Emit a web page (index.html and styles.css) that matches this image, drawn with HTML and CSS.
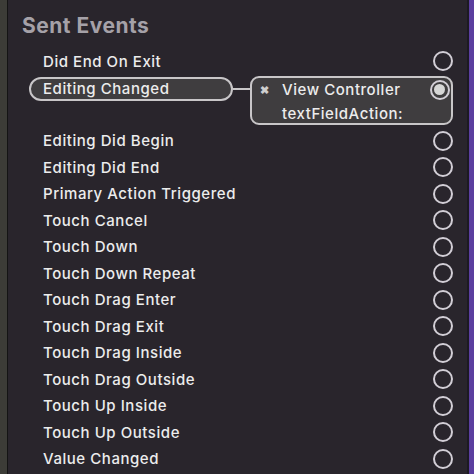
FILE: index.html
```html
<!DOCTYPE html>
<html>
<head>
<meta charset="utf-8">
<title>Sent Events</title>
<link rel="stylesheet" href="styles.css">
</head>
<body>
<div class="frame">
    <div class="left-strip"></div>
    <div class="panel">
        <div class="top-line"></div>
        <h2 class="heading">Sent Events</h2>

        <div class="events">
            <div class="row"><span class="label">Did End On Exit</span><span class="dot"></span></div>

            <div class="row connected">
                <div class="pill">Editing Changed</div>
                <div class="wire"></div>
                <div class="target">
                    <div class="target-line">
                        <span class="remove">&#10006;</span>
                        <span class="label">View Controller</span>
                        <span class="dot dot-on"></span>
                    </div>
                    <div class="target-line">
                        <span class="remove"></span>
                        <span class="label">textFieldAction:</span>
                    </div>
                </div>
            </div>

            <div class="row"><span class="label">Editing Did Begin</span><span class="dot"></span></div>
            <div class="row"><span class="label">Editing Did End</span><span class="dot"></span></div>
            <div class="row"><span class="label">Primary Action Triggered</span><span class="dot"></span></div>
            <div class="row"><span class="label">Touch Cancel</span><span class="dot"></span></div>
            <div class="row"><span class="label">Touch Down</span><span class="dot"></span></div>
            <div class="row"><span class="label">Touch Down Repeat</span><span class="dot"></span></div>
            <div class="row"><span class="label">Touch Drag Enter</span><span class="dot"></span></div>
            <div class="row"><span class="label">Touch Drag Exit</span><span class="dot"></span></div>
            <div class="row"><span class="label">Touch Drag Inside</span><span class="dot"></span></div>
            <div class="row"><span class="label">Touch Drag Outside</span><span class="dot"></span></div>
            <div class="row"><span class="label">Touch Up Inside</span><span class="dot"></span></div>
            <div class="row"><span class="label">Touch Up Outside</span><span class="dot"></span></div>
            <div class="row"><span class="label">Value Changed</span><span class="dot"></span></div>
        </div>
        <div class="bottom-line"></div>
    </div>
    <div class="right-edge"></div>
</div>
</body>
</html>
```

FILE: styles.css
```css
html, body {
    margin: 0;
    padding: 0;
    background-color: #29252c;
}

body {
    width: 474px;
    height: 474px;
    overflow: hidden;
    font-family: Inter, "Liberation Sans", sans-serif;
    color: #ececec;
}

.frame {
    display: flex;
    height: 474px;
}

.left-strip {
    width: 7px;
    background-color: #3c3c37;
    border-right: 1px solid #141414;
}

.panel {
    flex: 1;
    display: flex;
    flex-direction: column;
    background-color: #29252c;
}

.top-line {
    height: 2px;
    margin: 2px 12px 0 15px;
    background-color: #433f47;
}

.heading {
    margin: 11px 0 0 14px;
    font-size: 21px;
    font-weight: 700;
    letter-spacing: 0.5px;
    line-height: 25px;
    color: #a5a1a8;
}

.events {
    margin-top: 10px;
    padding-right: 14px;
}

.row {
    display: flex;
    align-items: center;
    justify-content: space-between;
    height: 26.5px;
    padding-left: 35px;
}

.label {
    font-size: 15px;
    font-weight: 500;
    letter-spacing: 0.55px;
}

.dot {
    box-sizing: border-box;
    width: 20px;
    height: 20px;
    border: 2px solid #d2ced6;
    border-radius: 50%;
}

.dot-on {
    position: relative;
    border-width: 2.5px;
}

.dot-on::after {
    content: "";
    position: absolute;
    left: 2px;
    top: 2px;
    width: 11px;
    height: 11px;
    border-radius: 50%;
    background-color: #d6d6d6;
}

.row.connected {
    height: 53px;
    align-items: flex-start;
    justify-content: flex-start;
    padding-left: 21px;
}

.pill {
    box-sizing: border-box;
    width: 204px;
    height: 24px;
    margin-top: 2px;
    padding-left: 12px;
    border: 2px solid #c8c6c8;
    border-radius: 12px;
    background-color: #3f3d3f;
    font-size: 15px;
    font-weight: 500;
    letter-spacing: 0.55px;
    line-height: 20px;
}

.wire {
    width: 17px;
    height: 2px;
    margin-top: 13px;
    background-color: #c8c6c8;
}

.target {
    box-sizing: border-box;
    flex: 1;
    height: 49px;
    margin-top: 1px;
    padding: 1px 1px 0 8px;
    border: 2px solid #c8c6c8;
    border-radius: 9px;
    background-color: #3f3d3f;
}

.target-line {
    display: flex;
    align-items: center;
    height: 22px;
}

.target-line + .target-line {
    height: 25px;
}

.remove {
    width: 22px;
    font-size: 11px;
    font-weight: 700;
    color: #cfcfcf;
}

.target-line .label {
    flex: 1;
}

.bottom-line {
    height: 2px;
    margin: auto 12px 2px 15px;
    background-color: #433f47;
}

.right-edge {
    width: 5px;
    border-left: 2px solid #1c1a22;
    background-color: #5b3e9f;
}
```
